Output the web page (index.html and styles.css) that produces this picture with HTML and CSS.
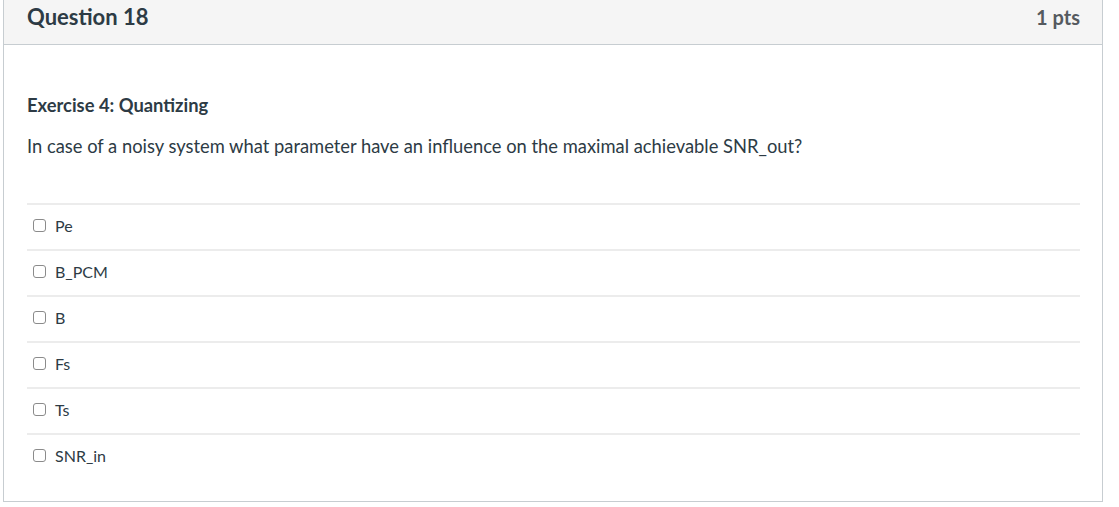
FILE: index.html
```html
<!DOCTYPE html>
<html>
<head>
<meta charset="utf-8">
<link rel="stylesheet" href="styles.css">
</head>
<body>
<div class="question">
  <div class="header">
    <span class="title">Question 18</span>
    <span class="pts">1 pts</span>
  </div>
  <div class="content">
    <p class="exercise">Exercise 4: Quantizing</p>
    <p class="prompt">In case of a noisy system what parameter have an influence on the maximal achievable SNR_out?</p>
    <div class="answers">
      <div class="answer"><span class="box"></span><span class="label">Pe</span></div>
      <div class="answer"><span class="box"></span><span class="label">B_PCM</span></div>
      <div class="answer"><span class="box"></span><span class="label">B</span></div>
      <div class="answer"><span class="box"></span><span class="label">Fs</span></div>
      <div class="answer"><span class="box"></span><span class="label">Ts</span></div>
      <div class="answer"><span class="box"></span><span class="label">SNR_in</span></div>
    </div>
  </div>
</div>
</body>
</html>
```
FILE: styles.css
```css
html, body {
  margin: 0;
  padding: 0;
  background: #ffffff;
}
body {
  font-family: Lato, "Open Sans", sans-serif;
  color: #2d3b45;
}
.question {
  margin-left: 3px;
  width: 1098px;
  border: 1px solid #c7cdd1;
  border-top: none;
}
.header {
  height: 45px;
  box-sizing: border-box;
  background: #f5f5f5;
  border-bottom: 1px solid #c7cdd1;
  display: flex;
  align-items: baseline;
  justify-content: space-between;
  padding: 4px 22px 0 23px;
}
.title {
  font-size: 22px;
  line-height: 26px;
  font-weight: 700;
  color: #2d3b45;
}
.pts {
  font-size: 20px;
  line-height: 26px;
  font-weight: 700;
  color: #555a5f;
}
.content {
  padding: 0 22px 22px 23px;
}
.exercise {
  margin: 0;
  padding-top: 48px;
  font-size: 18.35px;
  font-weight: 700;
  line-height: 24px;
}
.prompt {
  margin: 0;
  padding-top: 17px;
  font-size: 18.35px;
  line-height: 24px;
}
.answers {
  margin-top: 45px;
}
.answer {
  height: 46px;
  box-sizing: border-box;
  border-top: 2px solid #ececec;
  display: flex;
  align-items: center;
  padding: 0 0 4px 6px;
  font-size: 16px;
}
.box {
  width: 11px;
  height: 11px;
  border: 1.5px solid #8b8b8b;
  border-radius: 3px;
  margin-right: 9px;
  flex: none;
}
.label {
  color: #2d3b45;
}
```
